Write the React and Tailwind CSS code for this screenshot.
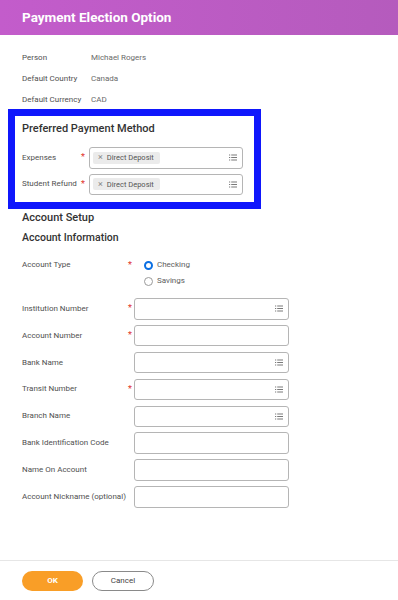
const font = { fontFamily: "Roboto, 'Liberation Sans', sans-serif" };

function ListIcon() {
  return (
    <svg width="8" height="7" viewBox="0 0 8 7" className="text-[#7a7a7a]">
      <rect x="0" y="0.5" width="1.2" height="1" fill="currentColor" />
      <rect x="0" y="3" width="1.2" height="1" fill="currentColor" />
      <rect x="0" y="5.5" width="1.2" height="1" fill="currentColor" />
      <rect x="2.2" y="0.5" width="5.8" height="1" fill="currentColor" />
      <rect x="2.2" y="3" width="5.8" height="1" fill="currentColor" />
      <rect x="2.2" y="5.5" width="5.8" height="1" fill="currentColor" />
    </svg>
  );
}

function Star({ show = true }) {
  return (
    <span className="w-[6px] text-[9px] leading-none text-[#e0322b]">{show ? "*" : ""}</span>
  );
}

function Field({ list, className = "" }) {
  return (
    <div
      className={`h-[21.5px] rounded-[3px] border border-[#b5b5b5] bg-white flex items-center justify-end pr-[5px] ${className}`}
    >
      {list && <ListIcon />}
    </div>
  );
}

function PillField() {
  return (
    <div className="ml-[2px] w-[154px] h-[21.5px] rounded-[3px] border border-[#b5b5b5] bg-white flex items-center justify-between pl-[3px] pr-[5px]">
      <div className="h-[12px] w-[67px] rounded-[2px] bg-[#ebebeb] flex items-center pl-[5px] text-[7.5px] text-[#555]">
        <span className="text-[9px] leading-none mr-[4px] text-[#888]">×</span>
        <span>Direct Deposit</span>
      </div>
      <ListIcon />
    </div>
  );
}

const accountFields = [
  { label: "Institution Number", req: true, list: true },
  { label: "Account Number", req: true, list: false },
  { label: "Bank Name", req: false, list: true },
  { label: "Transit Number", req: true, list: true },
  { label: "Branch Name", req: false, list: true },
  { label: "Bank Identification Code", req: false, list: false },
  { label: "Name On Account", req: false, list: false },
  { label: "Account Nickname (optional)", req: false, list: false },
];

export default function App() {
  return (
    <div style={font} className="h-[600px] w-[398px] bg-white flex flex-col overflow-hidden">
      {/* Header */}
      <header className="h-[35px] shrink-0 bg-gradient-to-r from-[#c35ccb] to-[#b55bbd] flex items-center px-[22px]">
        <h1 className="text-[13.5px] font-bold text-white">Payment Election Option</h1>
      </header>

      <main className="flex-1">
        {/* Person info */}
        <div className="pt-[12px] px-[22px] text-[8px]">
          {[
            ["Person", "Michael Rogers"],
            ["Default Country", "Canada"],
            ["Default Currency", "CAD"],
          ].map(([k, v]) => (
            <div key={k} className="h-[21px] flex items-center">
              <span className="w-[69px] text-[#505050]">{k}</span>
              <span className="text-[#6a6a6a]">{v}</span>
            </div>
          ))}
        </div>

        {/* Preferred Payment Method (highlighted) */}
        <div className="ml-[8px] mt-[-1px] w-[253px] border-[7px] border-[#0f17fc] bg-white pl-[7px] pb-[7px]">
          <div className="h-[26px] flex items-center">
            <h2 className="text-[11px] font-medium text-[#333]">Preferred Payment Method</h2>
          </div>
          <div className="mt-[5px] flex flex-col gap-[5px] text-[8px] text-[#505050]">
            <div className="flex items-center">
              <span className="w-[59px]">Expenses</span>
              <Star />
              <PillField />
            </div>
            <div className="flex items-center">
              <span className="w-[59px]">Student Refund</span>
              <Star />
              <PillField />
            </div>
          </div>
        </div>

        {/* Account setup */}
        <div className="px-[22px]">
          <div className="h-[17px] mt-[1px] flex items-center">
            <h2 className="text-[11px] font-medium text-[#333]">Account Setup</h2>
          </div>
          <div className="h-[20px] mt-[1px] flex items-center">
            <h3 className="text-[10.5px] font-medium text-[#333]">Account Information</h3>
          </div>

          <div className="mt-[9px] flex items-start text-[8px] text-[#505050]">
            <span className="w-[106px] h-[16px] flex items-center">Account Type</span>
            <span className="h-[16px] flex items-center">
              <Star />
            </span>
            <div className="ml-[10px] flex flex-col">
              <label className="h-[16px] flex items-center gap-[4px]">
                <span className="w-[9px] h-[9px] rounded-full border-[2.5px] border-[#0b6fe3] bg-white" />
                <span className="text-[#606060]">Checking</span>
              </label>
              <label className="h-[16px] flex items-center gap-[4px]">
                <span className="w-[9px] h-[9px] rounded-full border border-[#9a9a9a] bg-white" />
                <span className="text-[#606060]">Savings</span>
              </label>
            </div>
          </div>

          <div className="mt-[9px] flex flex-col gap-[5.4px] text-[8px] text-[#505050]">
            {accountFields.map((f) => (
              <div key={f.label} className="flex items-center">
                <span className="w-[106px]">{f.label}</span>
                <Star show={f.req} />
                <Field list={f.list} className="w-[155px]" />
              </div>
            ))}
          </div>
        </div>
      </main>

      {/* Footer */}
      <footer className="h-[40px] shrink-0 border-t border-[#e6e6e6] px-[22px] pt-[10px] flex items-start gap-[9px]">
        <button className="w-[61px] h-[20px] rounded-full bg-[#f99e27] text-white text-[8px] font-bold">
          OK
        </button>
        <button className="w-[62px] h-[20px] rounded-full border border-[#8a8a8a] bg-white text-[#444] text-[8px]">
          Cancel
        </button>
      </footer>
    </div>
  );
}
